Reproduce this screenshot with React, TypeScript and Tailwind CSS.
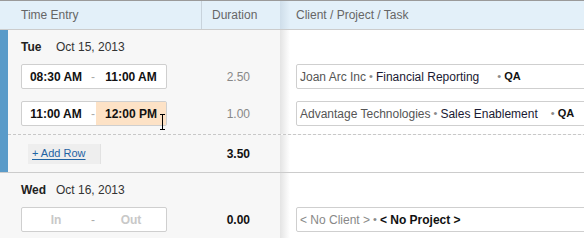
import React from "react";

const font = { fontFamily: '"Liberation Sans", Arial, sans-serif' };

function TimeBox({
  start,
  end,
  placeholder,
  highlightEnd,
}: {
  start: string;
  end: string;
  placeholder?: boolean;
  highlightEnd?: boolean;
}) {
  const txt = placeholder ? "text-[#c8c8c8]" : "text-[#111]";
  return (
    <div className="flex h-[25px] w-[146px] items-stretch rounded-[2px] border border-[#cfcfcf] bg-white text-[12px] font-bold">
      <div className={`flex w-[68px] items-center justify-center ${txt}`}>{start}</div>
      <div className="flex w-[6px] items-center justify-center font-normal text-[#aaa]">-</div>
      <div
        className={`flex w-[70px] items-center justify-center ${txt} ${
          highlightEnd ? "bg-[#fde2c6]" : ""
        }`}
      >
        {end}
      </div>
    </div>
  );
}

function ClientBox({ children }: { children: React.ReactNode }) {
  return (
    <div className="flex h-[25px] w-[330px] shrink-0 items-center whitespace-nowrap rounded-[2px] border border-[#cfcfcf] bg-white pl-[3px] text-[12px]">
      {children}
    </div>
  );
}

const Dot = ({ className = "" }: { className?: string }) => (
  <span className={`mx-[3px] text-[11px] text-[#8a8a8a] ${className}`}>•</span>
);

function Row({
  left,
  duration,
  client,
  h = "h-[25px]",
}: {
  left: React.ReactNode;
  duration: React.ReactNode;
  client: React.ReactNode;
  h?: string;
}) {
  return (
    <div className={`flex ${h}`}>
      <div className="flex w-[194px] items-center bg-[#f7f7f7] pl-[13px]">{left}</div>
      <div className="flex w-[78px] items-center justify-end bg-[#f7f7f7] pr-[30px] text-[12px]">
        {duration}
      </div>
      <div className="flex min-w-0 flex-1 items-center overflow-hidden bg-[linear-gradient(to_right,#e4e4e4,#ffffff_10px)] pl-[16px]">
        {client}
      </div>
    </div>
  );
}

function DateRow({ day, date }: { day: string; date: string }) {
  return (
    <Row
      h="h-[34px]"
      left={
        <div className="flex text-[12px] text-[#333]">
          <span className="w-[35px] font-bold text-[#222]">{day}</span>
          <span>{date}</span>
        </div>
      }
      duration={null}
      client={null}
    />
  );
}

export default function App() {
  return (
    <div className="relative h-[238px] w-[584px] overflow-hidden bg-[#f7f7f7]" style={font}>
      {/* Header */}
      <div className="flex h-[30px] border-t border-b border-t-[#9a9a9a] border-b-[#cccccc] bg-[#e3f0f9] text-[12px] text-[#666]">
        <div className="flex w-[201px] items-center pl-[21px]">Time Entry</div>
        <div className="flex w-[79px] items-center border-l border-[#c8d3dc] pl-[10px]">Duration</div>
        <div className="flex flex-1 items-center bg-[linear-gradient(to_right,#cfdeea,#e3f0f9_10px)] pl-[16px]">
          Client / Project / Task
        </div>
      </div>

      {/* Tue section */}
      <div className="flex">
        <div className="w-[8px] shrink-0 bg-[#5a9bc9]" />
        <div className="flex flex-1 flex-col">
          <DateRow day="Tue" date="Oct 15, 2013" />
          <div className="flex flex-col border-b border-dashed border-[#c8c8c8]">
            <Row
              left={<TimeBox start="08:30 AM" end="11:00 AM" />}
              duration={<span className="text-[#888]">2.50</span>}
              client={
                <ClientBox>
                  <span className="text-[#555]">Joan Arc Inc</span>
                  <Dot />
                  <span className="text-[#1a1a33]">Financial Reporting</span>
                  <Dot className="ml-[18px]" />
                  <span className="text-[11px] font-bold text-[#111]">QA</span>
                </ClientBox>
              }
            />
            <div className="h-[12px] bg-[linear-gradient(to_right,#f7f7f7_272px,#e4e4e4_272px,#ffffff_282px)]" />
            <Row
              left={<TimeBox start="11:00 AM" end="12:00 PM" highlightEnd />}
              duration={<span className="text-[#888]">1.00</span>}
              client={
                <ClientBox>
                  <span className="text-[#555]">Advantage Technologies</span>
                  <Dot />
                  <span className="text-[#1a1a33]">Sales Enablement</span>
                  <Dot className="ml-[13px]" />
                  <span className="text-[11px] font-bold text-[#111]">QA</span>
                </ClientBox>
              }
            />
            <div className="h-[8px] bg-[linear-gradient(to_right,#f7f7f7_272px,#e4e4e4_272px,#ffffff_282px)]" />
          </div>
          <div className="flex h-[37px]">
            <div className="flex w-[194px] items-center bg-[#f7f7f7] pl-[20px]">
              <button className="flex h-[20px] w-[73px] items-center border-r border-[#e2e2e2] bg-[#eeeeee] pl-[4px] text-[11px] text-[#1f63a3] underline underline-offset-2">
                + Add Row
              </button>
            </div>
            <div className="flex w-[78px] items-center justify-end bg-[#f7f7f7] pr-[30px] text-[12px] font-bold text-[#111]">
              3.50
            </div>
            <div className="flex-1 bg-[linear-gradient(to_right,#e4e4e4,#ffffff_10px)]" />
          </div>
        </div>
      </div>

      {/* Wed section */}
      <div className="flex border-t border-[#cccccc]">
        <div className="w-[8px] shrink-0 bg-[#f7f7f7]" />
        <div className="flex flex-1 flex-col">
          <DateRow day="Wed" date="Oct 16, 2013" />
          <Row
            left={<TimeBox start="In" end="Out" placeholder />}
            duration={<span className="font-bold text-[#111]">0.00</span>}
            client={
              <ClientBox>
                <span className="text-[#888]">&lt; No Client &gt;</span>
                <Dot />
                <span className="font-bold text-[#111]">&lt; No Project &gt;</span>
              </ClientBox>
            }
          />
          <div className="flex h-[40px]">
            <div className="w-[272px] bg-[#f7f7f7]" />
            <div className="flex-1 bg-[linear-gradient(to_right,#e4e4e4,#ffffff_10px)]" />
          </div>
        </div>
      </div>

      {/* I-beam cursor */}
      <svg className="absolute left-[158px] top-[113px]" width="9" height="18" viewBox="0 0 9 18">
        <path d="M4.5 1.5v15" stroke="#000" strokeWidth="1" fill="none" />
        <path d="M2 1h5v1H2zM2 16h5v1H2z" fill="#000" />
      </svg>
    </div>
  );
}
